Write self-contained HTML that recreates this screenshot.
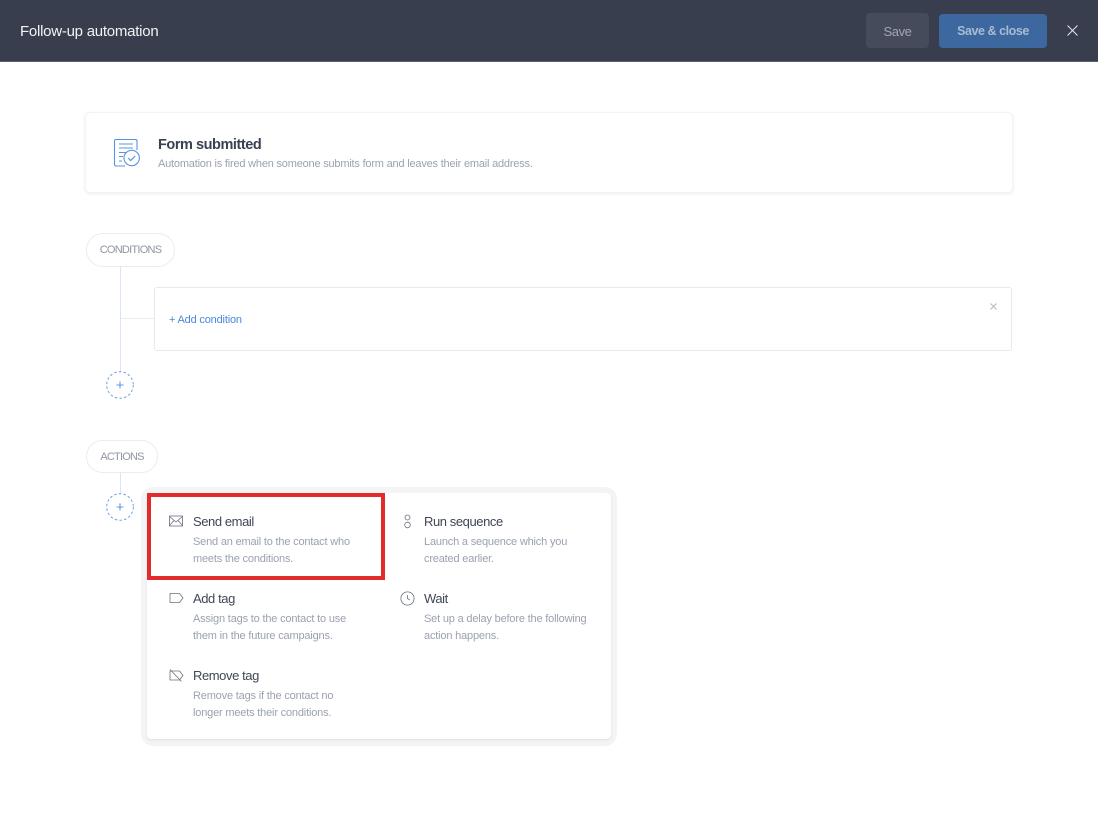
<!DOCTYPE html>
<html lang="en">
<head>
<meta charset="utf-8">
<title>Follow-up automation</title>
<style>
html,body{margin:0;padding:0;background:#fff;}
body{width:1098px;height:823px;position:relative;overflow:hidden;font-family:"Liberation Sans",sans-serif;}
.a{position:absolute;box-sizing:border-box;}
.t{position:absolute;white-space:nowrap;line-height:17px;}
.h{font-size:13px;color:#3f4655;line-height:18px;letter-spacing:-.42px;}
.d{font-size:11px;color:#9aa1b0;line-height:17px;letter-spacing:-.18px;}
svg{position:absolute;overflow:visible;}
</style>
</head>
<body>
<div class="a" style="left:0;top:0;width:1098px;height:62px;background:#383e4e;border-bottom:1px solid #5b6070;"></div>
<div class="t" style="left:20px;top:23px;font-size:15px;color:#f2f3f5;letter-spacing:-.25px;">Follow-up automation</div>
<div class="a" style="left:866px;top:13px;width:63px;height:35px;background:#454b5a;border-radius:4px;"></div>
<div class="t" style="left:866px;top:23px;width:63px;text-align:center;font-size:13px;color:#a2a6b0;letter-spacing:-.4px;">Save</div>
<div class="a" style="left:939px;top:14px;width:108px;height:34px;background:#3c689f;border-radius:4px;"></div>
<div class="t" style="left:939px;top:23px;width:108px;text-align:center;font-size:12.5px;font-weight:bold;color:#a9bbd2;letter-spacing:-.45px;">Save &amp; close</div>
<svg style="left:1067px;top:25px" width="11" height="11" viewBox="0 0 11 11"><path d="M.5.5l10 10M10.500.5l-10 10" stroke="#e4e6ea" stroke-width="1" fill="none"/></svg>

<div class="a" style="left:85px;top:112px;width:928px;height:81px;background:#fff;border:1px solid #f2f3f6;border-radius:5px;box-shadow:0 1px 3px rgba(60,70,90,.1);"></div>
<svg style="left:113px;top:138px" width="28" height="29" viewBox="0 0 28 29" fill="none" stroke="#5a93e2" stroke-width="1.100">
<path d="M12 28H3a1.500 1.500 0 0 1-1.500-1.500V3A1.500 1.500 0 0 1 3 1.500h19.500A1.500 1.500 0 0 1 24 3v9"/>
<path d="M6 6h14M6 10h14M6 14.500h14M6 18.500h4M6 23h3"/>
<circle cx="18.700" cy="20" r="7.700" fill="#fff"/>
<path d="M15.200 20l2.500 2.500 4.500-4.500" stroke-width="1.200"/>
</svg>
<div class="t" style="left:158px;top:136px;font-size:14.5px;font-weight:bold;color:#3a4151;line-height:18px;letter-spacing:-.45px;">Form submitted</div>
<div class="t d" style="left:158px;top:156px;letter-spacing:-.2px;">Automation is fired when someone submits form and leaves their email address.</div>

<div class="a" style="left:86px;top:233px;width:89px;height:34px;border:1px solid #e8ecf3;border-radius:17px;background:#fff;"></div>
<div class="t" style="left:86px;top:242px;width:89px;text-align:center;font-size:11px;color:#8f95a4;letter-spacing:-.75px;">CONDITIONS</div>
<div class="a" style="left:120px;top:267px;width:1px;height:105px;background:#d8e5f6;"></div>
<div class="a" style="left:121px;top:318px;width:34px;height:1px;background:#e8ebf0;"></div>
<div class="a" style="left:154px;top:287px;width:858px;height:64px;border:1px solid #e6eaf0;border-radius:3px;background:#fff;"></div>
<div class="t" style="left:169px;top:312px;font-size:11px;color:#4a88dc;letter-spacing:-.18px;">+ Add condition</div>
<svg style="left:990px;top:303px" width="7" height="7" viewBox="0 0 7 7"><path d="M.5.5l6 6M6.500.5l-6 6" stroke="#b4b8c3" stroke-width="1" fill="none"/></svg>

<svg style="left:106px;top:371px" width="28" height="28" viewBox="0 0 28 28" fill="none"><circle cx="14" cy="14" r="13.300" stroke="#6c9fe6" stroke-dasharray="2.500 2.200"/><path d="M14 10.500v7M10.500 14h7" stroke="#5f97e3" stroke-width="1.100"/></svg>

<div class="a" style="left:86px;top:440px;width:72px;height:33px;border:1px solid #e8ecf3;border-radius:17px;background:#fff;"></div>
<div class="t" style="left:86px;top:448.500px;width:72px;text-align:center;font-size:11px;color:#8f95a4;letter-spacing:-.8px;">ACTIONS</div>
<div class="a" style="left:120px;top:473px;width:1px;height:20px;background:#d8e5f6;"></div>
<svg style="left:106px;top:493px" width="28" height="28" viewBox="0 0 28 28" fill="none"><circle cx="14" cy="14" r="13.300" stroke="#6c9fe6" stroke-dasharray="2.500 2.200"/><path d="M14 10.500v7M10.500 14h7" stroke="#5f97e3" stroke-width="1.100"/></svg>

<div class="a" style="left:141px;top:487px;width:476px;height:259px;background:#f3f4f6;border-radius:12px;"></div>
<div class="a" style="left:147px;top:493px;width:464px;height:246px;background:#fff;border-radius:4px;box-shadow:0 1px 2px rgba(60,70,90,.12);"></div>
<div class="a" style="left:147px;top:493px;width:238px;height:87px;border:4px solid #e32b2b;background:#fff;"></div>

<svg style="left:169px;top:515px" width="14" height="12" viewBox="0 0 14 12" fill="none" stroke="#6a707c" stroke-width=".8"><rect x=".5" y="1" width="13" height="10"/><path d="M.5 1.500L7 7l6.500-5.500M.5 10.500L5 5.500M13.500 10.500L9 5.500"/></svg>
<div class="t h" style="left:193px;top:513px;">Send email</div>
<div class="t d" style="left:193px;top:534px;">Send an email to the contact who</div>
<div class="t d" style="left:193px;top:551px;">meets the conditions.</div>

<svg style="left:403px;top:514px" width="9" height="15" viewBox="0 0 9 15" fill="none" stroke="#6a707c" stroke-width=".8"><circle cx="4.500" cy="3.500" r="2.500"/><circle cx="4.500" cy="11" r="2.800"/></svg>
<div class="t h" style="left:424px;top:513px;">Run sequence</div>
<div class="t d" style="left:424px;top:534px;">Launch a sequence which you</div>
<div class="t d" style="left:424px;top:551px;">created earlier.</div>

<svg style="left:169px;top:592px" width="15" height="12" viewBox="0 0 15 12" fill="none" stroke="#6a707c" stroke-width=".8"><path d="M1 1.500h9.500L14 6l-3.500 4.500H1z" stroke-linejoin="round"/></svg>
<div class="t h" style="left:193px;top:590px;">Add tag</div>
<div class="t d" style="left:193px;top:611px;">Assign tags to the contact to use</div>
<div class="t d" style="left:193px;top:628px;">them in the future campaigns.</div>

<svg style="left:400px;top:591px" width="15" height="15" viewBox="0 0 15 15" fill="none" stroke="#6a707c" stroke-width=".8"><circle cx="7.500" cy="7.500" r="6.600"/><path d="M7.500 4v3.500l2.300 1.500"/></svg>
<div class="t h" style="left:424px;top:590px;">Wait</div>
<div class="t d" style="left:424px;top:611px;">Set up a delay before the following</div>
<div class="t d" style="left:424px;top:628px;">action happens.</div>

<svg style="left:169px;top:669px" width="15" height="13" viewBox="0 0 15 13" fill="none" stroke="#6a707c" stroke-width=".8"><path d="M1 2h9.500L14 6.500 10.500 11H1z" stroke-linejoin="round"/><path d="M1 .5L12.500 12.500"/></svg>
<div class="t h" style="left:193px;top:667px;">Remove tag</div>
<div class="t d" style="left:193px;top:688px;">Remove tags if the contact no</div>
<div class="t d" style="left:193px;top:705px;">longer meets their conditions.</div>
</body>
</html>
